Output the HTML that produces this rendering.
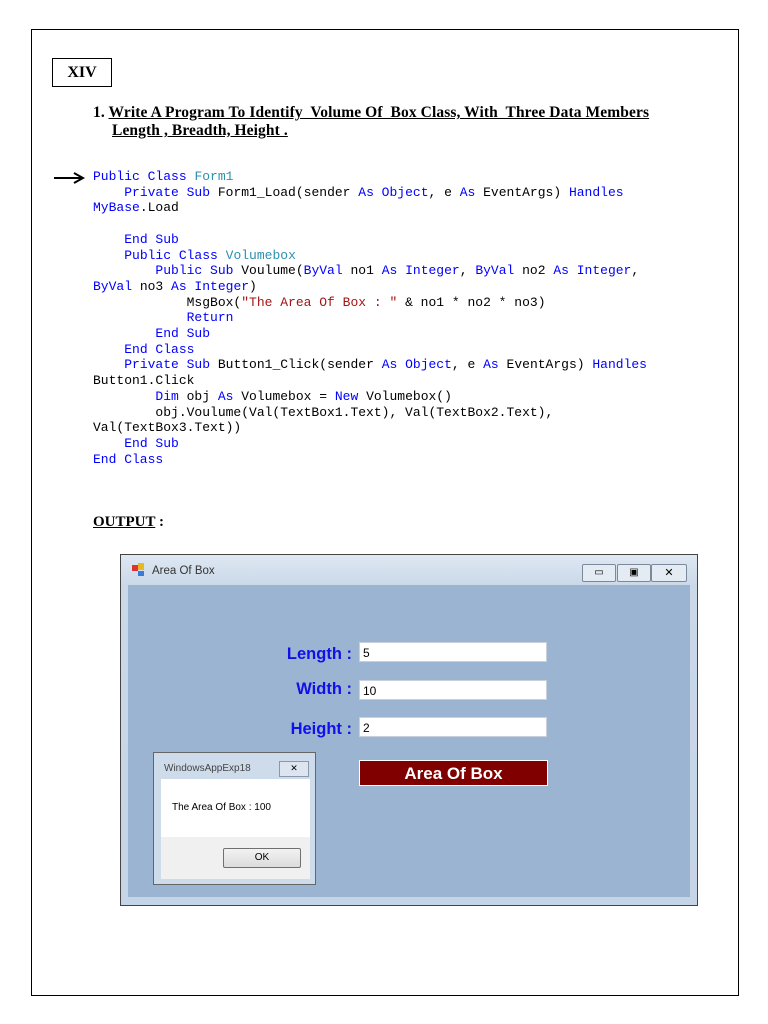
<!DOCTYPE html>
<html><head><style>
body{margin:0;background:#fff;width:768px;height:1024px;position:relative;overflow:hidden;font-family:"Liberation Serif",serif}
.abs{position:absolute}
.frame{left:31px;top:29px;width:706px;height:965px;border:1px solid #000}
.code{left:93px;top:169px;font-family:"Liberation Mono",monospace;font-size:13px;line-height:15.7px;white-space:pre;color:#000}
.k{color:#0000ff}.t{color:#2b91af}.s{color:#a31515}
.lbl{font-family:"Liberation Sans",sans-serif;font-weight:bold;font-size:16.5px;color:#1010e8;text-align:right;width:120px}
.tb{background:#fff;border:1px solid #c8d0dc;width:188px;height:20px;font-family:"Liberation Sans",sans-serif;font-size:12px;line-height:20px;padding-left:3px;box-sizing:border-box}
</style></head><body>
<div class="abs frame"></div>
<div class="abs" style="left:52px;top:58px;width:58px;height:27px;border:1px solid #000;font-weight:bold;font-size:16px;text-align:center;line-height:27px">XIV</div>
<div class="abs" style="left:93px;top:104px;font-weight:bold;font-size:15.5px;line-height:18px;letter-spacing:0.1px">1. <u>Write A Program To Identify&nbsp; Volume Of&nbsp; Box Class, With&nbsp; Three Data Members</u><br><span style="padding-left:19px"><u>Length , Breadth, Height .</u></span></div>
<svg class="abs" style="left:53px;top:171px" width="32" height="14"><line x1="1" y1="7" x2="28" y2="7" stroke="#000" stroke-width="2"/><path d="M21 2 L30 7 L21 12" fill="none" stroke="#000" stroke-width="2"/></svg>
<div class="abs code"><span class="k">Public Class</span> <span class="t">Form1</span>
    <span class="k">Private Sub</span> Form1_Load(sender <span class="k">As Object</span>, e <span class="k">As</span> EventArgs) <span class="k">Handles</span>
<span class="k">MyBase</span>.Load

    <span class="k">End Sub</span>
    <span class="k">Public Class</span> <span class="t">Volumebox</span>
        <span class="k">Public Sub</span> Voulume(<span class="k">ByVal</span> no1 <span class="k">As Integer</span>, <span class="k">ByVal</span> no2 <span class="k">As Integer</span>,
<span class="k">ByVal</span> no3 <span class="k">As Integer</span>)
            MsgBox(<span class="s">"The Area Of Box : "</span> &amp; no1 * no2 * no3)
            <span class="k">Return</span>
        <span class="k">End Sub</span>
    <span class="k">End Class</span>
    <span class="k">Private Sub</span> Button1_Click(sender <span class="k">As Object</span>, e <span class="k">As</span> EventArgs) <span class="k">Handles</span>
Button1.Click
        <span class="k">Dim</span> obj <span class="k">As</span> Volumebox = <span class="k">New</span> Volumebox()
        obj.Voulume(Val(TextBox1.Text), Val(TextBox2.Text),
Val(TextBox3.Text))
    <span class="k">End Sub</span>
<span class="k">End Class</span></div>
<div class="abs" style="left:93px;top:514px;font-weight:bold;font-size:15px"><u>OUTPUT</u> :</div>
<!-- window -->
<div class="abs" style="left:120px;top:554px;width:576px;height:350px;border:1px solid #444;background:linear-gradient(#dfe8f3,#cad8e8 30px,#c5d4e6)"></div>
<div class="abs" style="left:132px;top:565px;width:6px;height:6px;background:#d33"></div>
<div class="abs" style="left:138px;top:563px;width:6px;height:7px;background:#e8b820"></div>
<div class="abs" style="left:138px;top:571px;width:6px;height:5px;background:#3a7bd5"></div>
<div class="abs" style="left:152px;top:565px;font-family:'Liberation Sans',sans-serif;font-size:11.5px;color:#333">Area Of Box</div>
<div class="abs" style="left:582px;top:564px;width:32px;height:16px;border:1px solid #7a8a9c;border-radius:2px;background:#e4ebf3;font-size:10px;text-align:center;line-height:16px;font-family:'Liberation Sans'">▭</div>
<div class="abs" style="left:617px;top:564px;width:32px;height:16px;border:1px solid #7a8a9c;border-radius:2px;background:#e4ebf3;font-size:10px;text-align:center;line-height:16px;font-family:'Liberation Sans'">▣</div>
<div class="abs" style="left:651px;top:564px;width:34px;height:16px;border:1px solid #7a8a9c;border-radius:2px;background:#e4ebf3;font-size:11px;text-align:center;line-height:16px;font-family:'DejaVu Sans'">✕</div>
<div class="abs" style="left:128px;top:585px;width:562px;height:312px;background:#9bb4d1"></div>
<div class="abs lbl" style="left:232px;top:645px">Length :</div>
<div class="abs lbl" style="left:232px;top:680px">Width :</div>
<div class="abs lbl" style="left:232px;top:720px">Height :</div>
<div class="abs tb" style="left:359px;top:642px">5</div>
<div class="abs tb" style="left:359px;top:680px">10</div>
<div class="abs tb" style="left:359px;top:717px">2</div>
<div class="abs" style="left:359px;top:760px;width:189px;height:26px;background:#800000;border:1px solid #fff;box-sizing:border-box;color:#fff;font-family:'Liberation Sans',sans-serif;font-weight:bold;font-size:17px;text-align:center;line-height:26px">Area Of Box</div>
<!-- msgbox -->
<div class="abs" style="left:153px;top:752px;width:163px;height:133px;border:1px solid #666;background:#cddbeb;box-sizing:border-box"></div>
<div class="abs" style="left:164px;top:763px;font-family:'Liberation Sans',sans-serif;font-size:10px;color:#444">WindowsAppExp18</div>
<div class="abs" style="left:279px;top:761px;width:28px;height:14px;border:1px solid #8a99aa;background:#dde6f0;font-size:9px;text-align:center;line-height:14px;font-family:'DejaVu Sans'">✕</div>
<div class="abs" style="left:161px;top:779px;width:149px;height:58px;background:#fff"></div>
<div class="abs" style="left:161px;top:837px;width:149px;height:42px;background:#f0f0f0"></div>
<div class="abs" style="left:172px;top:802px;font-family:'Liberation Sans',sans-serif;font-size:10px">The Area Of Box : 100</div>
<div class="abs" style="left:223px;top:848px;width:78px;height:20px;border:1px solid #707070;border-radius:2px;background:linear-gradient(#f2f2f2,#dcdcdc);box-sizing:border-box;font-family:'Liberation Sans',sans-serif;font-size:10px;text-align:center;line-height:18px">OK</div>
</body></html>
